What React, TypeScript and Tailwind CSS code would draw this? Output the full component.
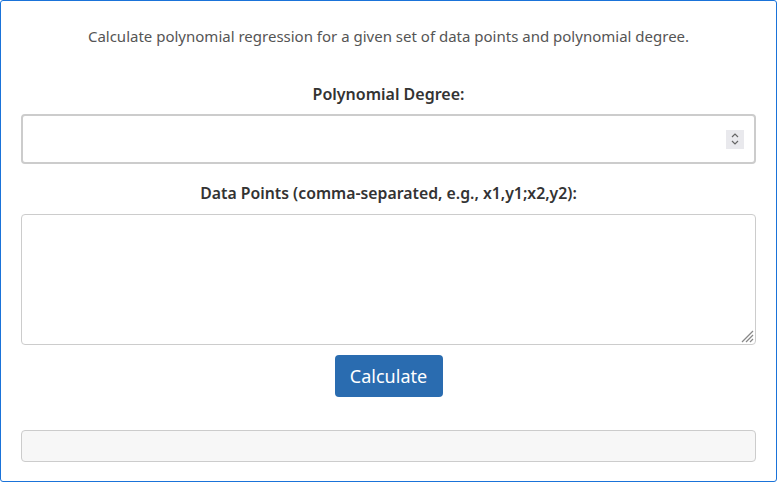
import React from "react";

export default function App() {
  return (
    <div className="w-[778px] h-[483px] bg-white" style={{ fontFamily: '"Noto Sans", "Open Sans", sans-serif' }}>
      <div className="w-[777px] h-[482px] border border-[#1a73d9] rounded-[3px] px-[20px] flex flex-col">
        <p className="text-center text-[15px] text-[#555] mt-[24px] leading-[22px]">
          Calculate polynomial regression for a given set of data points and polynomial degree.
        </p>
        <label className="text-center text-[16px] font-semibold text-[#333] mt-[36px] leading-[22px]">Polynomial Degree:</label>
        <div className="mt-[9px] h-[50px] border-2 border-[#ccc] rounded-[4px] flex items-center justify-end pr-[10px]">
          <div className="w-[18px] h-[19px] bg-[#e9e9ed] flex items-center justify-center">
            <svg width="10" height="14" viewBox="0 0 10 14" fill="none" stroke="#666" strokeWidth="1.2">
              <path d="M2 5 L5 2 L8 5" />
              <path d="M2 9 L5 12 L8 9" />
            </svg>
          </div>
        </div>
        <label className="text-center text-[15.8px] font-semibold text-[#333] mt-[18px] leading-[22px]">
          Data Points (comma-separated, e.g., x1,y1;x2,y2):
        </label>
        <div className="relative mt-[10px] h-[131px] border border-[#ccc] rounded-[4px]">
          <svg className="absolute right-[1px] bottom-[1px]" width="14" height="14" viewBox="0 0 14 14" stroke="#888" strokeWidth="1.2">
            <path d="M13 2 L2 13" />
            <path d="M13 6 L6 13" />
            <path d="M13 10 L10 13" />
          </svg>
        </div>
        <div className="flex justify-center mt-[10px]">
          <button className="w-[108px] h-[42px] bg-[#2a6cb0] text-white text-[18px] rounded-[4px]">Calculate</button>
        </div>
        <div className="mt-[33px] h-[32px] bg-[#f7f7f7] border border-[#ccc] rounded-[4px]" />
      </div>
    </div>
  );
}
